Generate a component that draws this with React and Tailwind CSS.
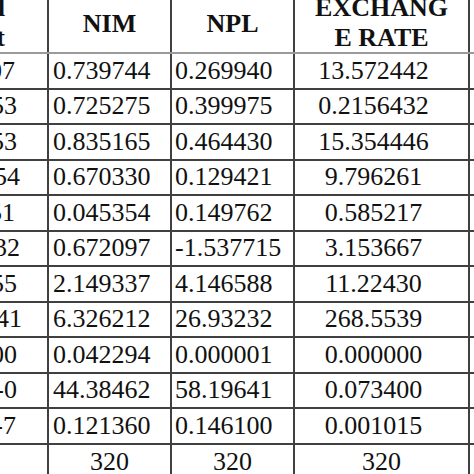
import React from 'react';

const ROWS = [
  { a: '13.79507', pa: 'pr-[32px]', nim: '0.739744', npl: '0.269940', ex: '13.572442' },
  { a: '8.124353', pa: 'pr-[30px]', nim: '0.725275', npl: '0.399975', ex: '0.2156432' },
  { a: '5.327753', pa: 'pr-[30px]', nim: '0.835165', npl: '0.464430', ex: '15.354446' },
  { a: '2.471054', pa: 'pr-[27px]', nim: '0.670330', npl: '0.129421', ex: '9.796261' },
  { a: '0.884551', pa: 'pr-[32px]', nim: '0.045354', npl: '0.149762', ex: '0.585217' },
  { a: '0.612332', pa: 'pr-[27px]', nim: '0.672097', npl: '-1.537715', ex: '3.153667' },
  { a: '3.406655', pa: 'pr-[30px]', nim: '2.149337', npl: '4.146588', ex: '11.22430' },
  { a: '61.00841', pa: 'pr-[25px]', nim: '6.326212', npl: '26.93232', ex: '268.5539' },
  { a: '0.000000', pa: 'pr-[30px]', nim: '0.042294', npl: '0.000001', ex: '0.000000' },
  { a: '1.62E-0', pa: 'pr-[30px]', nim: '44.38462', npl: '58.19641', ex: '0.073400' },
  { a: '2.1E-7', pa: 'pr-[31px]', nim: '0.121360', npl: '0.146100', ex: '0.001015' },
];

const line = 'border-r-2 border-[#404040]';

export default function App() {
  return (
    <div
      className="w-[474px] h-[474px] overflow-hidden bg-white text-[#111]"
      style={{ fontFamily: '"Liberation Serif", "Times New Roman", serif' }}
    >
      <div className="flex flex-col mt-[-6px] text-[26px]">
        <div className="flex h-[60px] border-b-2 border-[#9a9a9a] font-bold leading-[30px]">
          <div className={`w-[49px] shrink-0 flex flex-col items-end justify-center pr-[42px] whitespace-nowrap ${line}`}>
            <span>Total Fund</span>
            <span>Asset</span>
          </div>
          <div className={`w-[123px] shrink-0 flex items-center justify-center pt-[2px] ${line}`}>NIM</div>
          <div className={`w-[123px] shrink-0 flex items-center justify-center pt-[2px] ${line}`}>NPL</div>
          <div className={`w-[175px] shrink-0 flex flex-col items-center justify-center ${line}`}>
            <span>EXCHANG</span>
            <span>E RATE</span>
          </div>
          <div className="flex-1"></div>
        </div>

        {ROWS.map((r, i) => (
          <div key={i} className="flex h-[35.5px] border-b-2 border-[#404040] leading-none">
            <div className={`w-[49px] shrink-0 flex items-center justify-end whitespace-nowrap ${r.pa} ${line}`}>
              {r.a}
            </div>
            <div className={`w-[123px] shrink-0 flex items-center pl-[4px] ${line}`}>{r.nim}</div>
            <div className={`w-[123px] shrink-0 flex items-center pl-[3px] ${line}`}>{r.npl}</div>
            <div className={`w-[175px] shrink-0 flex items-center justify-center pr-4 ${line}`}>{r.ex}</div>
            <div className="flex-1"></div>
          </div>
        ))}

        <div className="flex h-[35.5px] leading-none">
          <div className={`w-[49px] shrink-0 ${line}`}></div>
          <div className={`w-[123px] shrink-0 flex items-center justify-center ${line}`}>320</div>
          <div className={`w-[123px] shrink-0 flex items-center justify-center ${line}`}>320</div>
          <div className={`w-[175px] shrink-0 flex items-center justify-center ${line}`}>320</div>
          <div className="flex-1"></div>
        </div>
      </div>
    </div>
  );
}
